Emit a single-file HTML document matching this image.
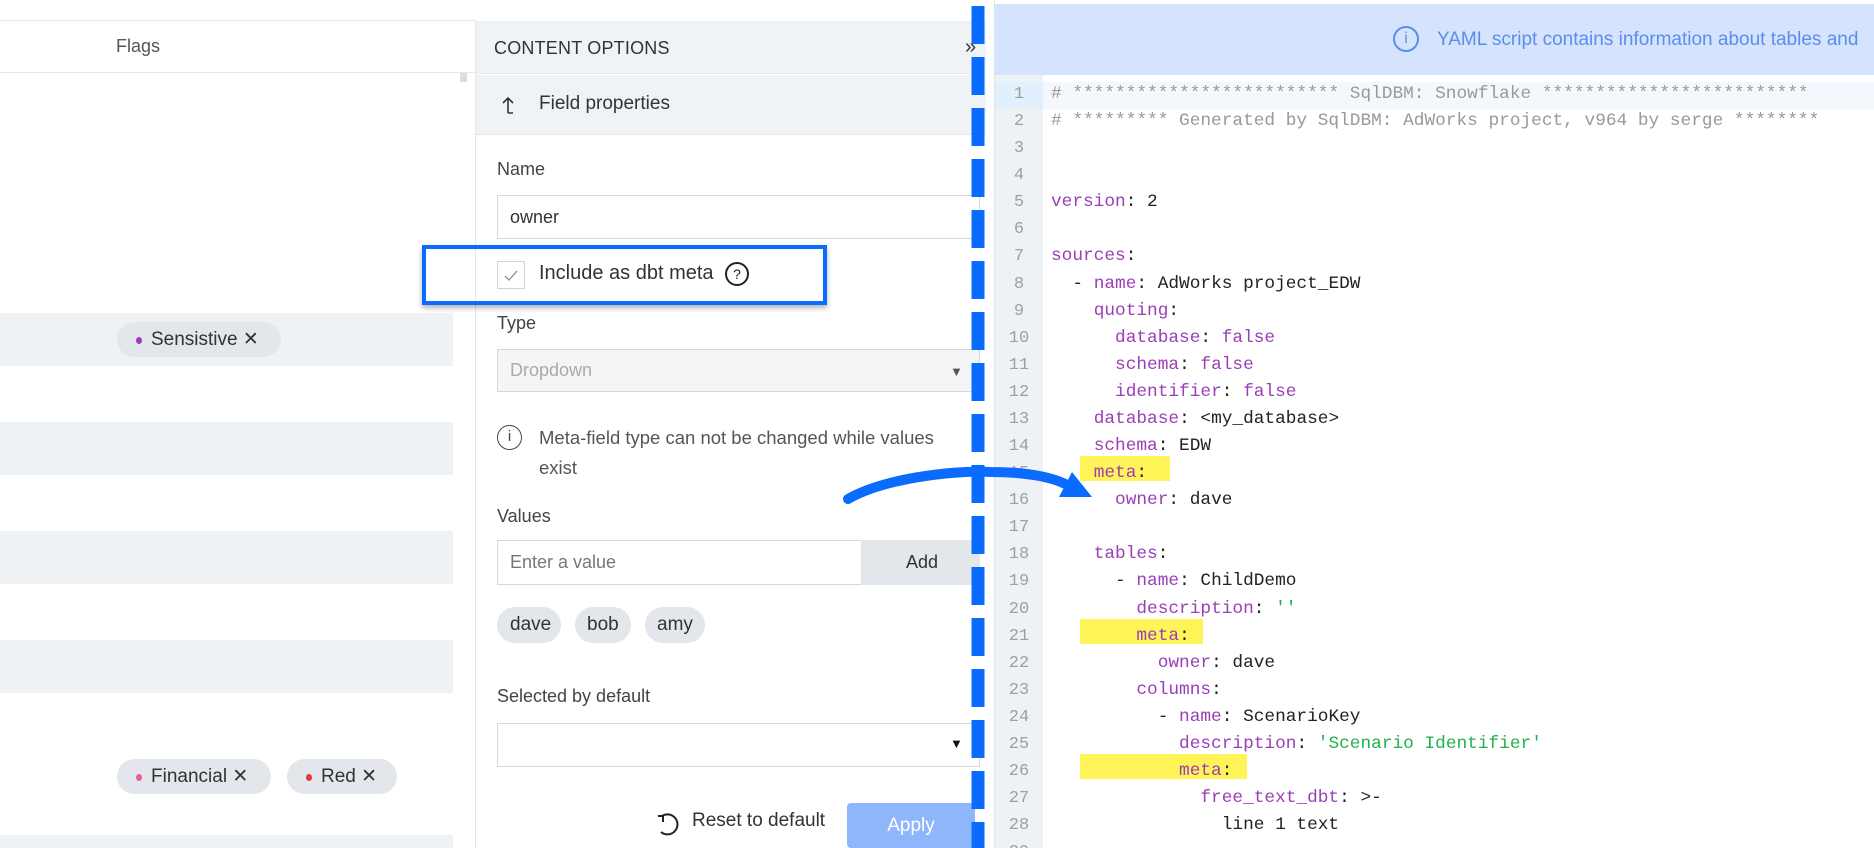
<!DOCTYPE html>
<html><head><meta charset="utf-8"><style>
*{box-sizing:border-box;margin:0;padding:0}
html,body{width:1874px;height:848px;overflow:hidden}
body{background:#fff;font-family:"Liberation Sans",sans-serif;position:relative;color:#333}
.abs{position:absolute}
.stripe{position:absolute;left:0;width:453px;height:53px;background:#eff2f5}
.chip{position:absolute;height:35px;border-radius:18px;background:#e3e6ea;font-size:19px;line-height:35px;padding-left:34px;color:#333}
.chip .d{position:absolute;left:19px;top:15px;width:6px;height:7px;border-radius:50%}
.lbl{position:absolute;left:497px;font-size:18px;color:#444}
.inp{position:absolute;left:497px;width:483px;border:1px solid #d5d8dc;background:#fff;font-size:18px;padding-left:12px}
.ln{position:absolute;left:995px;width:48px;text-align:center;font-family:"Liberation Mono",monospace;font-size:17px;color:#9aa0a8}
.code{position:absolute;left:1051px;font-family:"Liberation Mono",monospace;font-size:17.8px;white-space:pre;color:#222}
.k{color:#9b3fb5}.c{color:#999}.s{color:#22b24c}
.hl{position:absolute;left:1080px;height:25px;background:#fff457}
</style></head><body>
<div class="abs" style="left:0;top:20px;width:475px;height:1px;background:#e3e6ea"></div>
<div class="abs" style="left:0;top:72px;width:475px;height:1px;background:#e3e6ea"></div>
<div class="abs" style="left:116px;top:36px;font-size:18px;color:#555">Flags</div>
<div class="abs" style="left:460px;top:73px;width:7px;height:9px;background:#dcdee1"></div>
<div class="stripe" style="top:313px"></div>
<div class="stripe" style="top:422px"></div>
<div class="stripe" style="top:531px"></div>
<div class="stripe" style="top:640px"></div>
<div class="stripe" style="top:835px;height:13px"></div>
<div class="chip" style="left:117px;top:322px;width:164px"><span class="d" style="background:#9c3fb8"></span>Sensistive ✕</div>
<div class="chip" style="left:117px;top:759px;width:154px"><span class="d" style="background:#e95aa8"></span>Financial ✕</div>
<div class="chip" style="left:287px;top:759px;width:110px"><span class="d" style="background:#e23a3a"></span>Red ✕</div>

<div class="abs" style="left:475px;top:20px;width:1px;height:828px;background:#e3e6ea"></div>
<div class="abs" style="left:476px;top:21px;width:510px;height:53px;background:#eff3f6;border-bottom:1px solid #e3e6ea"></div>
<div class="abs" style="left:494px;top:38px;font-size:18px;color:#333;letter-spacing:.2px">CONTENT OPTIONS</div>
<div class="abs" style="left:965px;top:36px;font-size:20px;color:#333">»</div>
<div class="abs" style="left:476px;top:75px;width:510px;height:60px;background:#eff3f6;border-bottom:1px solid #e3e6ea"></div>
<svg class="abs" style="left:500px;top:95px" width="16" height="20" viewBox="0 0 16 20"><path d="M8 18V3M3 8l5-5 5 5M8 18h5" fill="none" stroke="#333" stroke-width="1.6"/></svg>
<div class="abs" style="left:539px;top:93px;font-size:19px;color:#333">Field properties</div>
<div class="lbl" style="top:159px">Name</div>
<div class="inp" style="top:195px;height:44px;line-height:42px;color:#333">owner</div>
<div class="abs" style="left:422px;top:245px;width:405px;height:60px;border:4px solid #0a6cff;box-shadow:0 3px 5px rgba(0,0,0,.3)"></div>
<div class="abs" style="left:497px;top:261px;width:28px;height:28px;border:1px solid #cfd3d8;background:#fff"></div>
<svg class="abs" style="left:502px;top:266px" width="18" height="18"><path d="M3 10l4 4 8-9" fill="none" stroke="#888" stroke-width="1.2"/></svg>
<div class="abs" style="left:539px;top:262px;font-size:20px;color:#333">Include as dbt meta</div>
<div class="abs" style="left:725px;top:262px;width:24px;height:24px;border:2px solid #222;border-radius:50%;font-size:14px;text-align:center;line-height:20px;color:#222">?</div>
<div class="lbl" style="top:313px">Type</div>
<div class="inp" style="top:349px;height:43px;line-height:41px;background:#f3f5f7;color:#aaa">Dropdown</div>
<div class="abs" style="left:950px;top:364px;font-size:13px;color:#555">▼</div>
<div class="abs" style="left:497px;top:425px;width:25px;height:25px;border:1.5px solid #444;border-radius:50%;font-size:15px;text-align:center;line-height:22px;color:#444">i</div>
<div class="abs" style="left:539px;top:423px;font-size:18.5px;color:#555;line-height:30px;width:445px">Meta-field type can not be changed while values<br>exist</div>
<div class="lbl" style="top:506px">Values</div>
<div class="inp" style="top:540px;height:45px;line-height:43px;color:#777;width:365px">Enter a value</div>
<div class="abs" style="left:861px;top:540px;width:119px;height:45px;background:#e3e6ea;font-size:18px;line-height:45px;padding-left:45px;color:#333">Add</div>
<div class="chip" style="left:497px;top:607px;width:64px;height:36px;padding-left:13px;line-height:36px">dave</div>
<div class="chip" style="left:575px;top:607px;width:56px;height:36px;padding-left:12px;line-height:36px">bob</div>
<div class="chip" style="left:645px;top:607px;width:60px;height:36px;padding-left:12px;line-height:36px">amy</div>
<div class="lbl" style="top:686px">Selected by default</div>
<div class="inp" style="top:723px;height:44px"></div>
<div class="abs" style="left:950px;top:736px;font-size:13px;color:#111">▼</div>
<svg class="abs" style="left:655px;top:810px" width="26" height="28" viewBox="0 0 26 28"><path d="M7 6A10 10 0 1 1 6 22" fill="none" stroke="#222" stroke-width="2"/><path d="M3 6h5v6" fill="none" stroke="#222" stroke-width="2"/></svg>
<div class="abs" style="left:692px;top:810px;font-size:19px;color:#333">Reset to default</div>
<div class="abs" style="left:847px;top:803px;width:128px;height:45px;background:#8fb6fb;border-radius:4px;color:#fff;font-size:19px;line-height:45px;text-align:center">Apply</div>

<div class="abs" style="left:994px;top:0;width:880px;height:848px;background:#fff;border-left:1px solid #e3e6ea"></div>
<div class="abs" style="left:994px;top:4px;width:880px;height:71px;background:#d5e4fc"></div>
<div class="abs" style="left:1393px;top:26px;width:26px;height:26px;border:2px solid #5b8def;border-radius:50%;color:#5b8def;font-size:16px;text-align:center;line-height:22px">i</div>
<div class="abs" style="left:1437px;top:29px;font-size:19px;color:#5b8def;white-space:nowrap">YAML script contains information about tables and</div>
<div class="abs" style="left:995px;top:75px;width:48px;height:773px;background:#eff2f5"></div>
<div class="abs" style="left:995px;top:82px;width:48px;height:27px;background:#e2effd"></div>
<div class="abs" style="left:1043px;top:82px;width:831px;height:27px;background:#f4f8fe"></div>
<div class="hl" style="top:456px;width:90px"></div>
<div class="hl" style="top:619px;width:123px"></div>
<div class="hl" style="top:754px;width:167px"></div>
<div id="code"></div>
<script>
var L=[
'<span class="c"># ************************* SqlDBM: Snowflake *************************</span>',
'<span class="c"># ********* Generated by SqlDBM: AdWorks project, v964 by serge ********</span>',
'','',
'<span class="k">version</span>: 2','',
'<span class="k">sources</span>:',
'  - <span class="k">name</span>: AdWorks project_EDW',
'    <span class="k">quoting</span>:',
'      <span class="k">database</span>: <span class="k">false</span>',
'      <span class="k">schema</span>: <span class="k">false</span>',
'      <span class="k">identifier</span>: <span class="k">false</span>',
'    <span class="k">database</span>: &lt;my_database&gt;',
'    <span class="k">schema</span>: EDW',
'    <span class="k">meta</span>:',
'      <span class="k">owner</span>: dave','',
'    <span class="k">tables</span>:',
'      - <span class="k">name</span>: ChildDemo',
'        <span class="k">description</span>: <span class="s">\'\'</span>',
'        <span class="k">meta</span>:',
'          <span class="k">owner</span>: dave',
'        <span class="k">columns</span>:',
'          - <span class="k">name</span>: ScenarioKey',
'            <span class="k">description</span>: <span class="s">\'Scenario Identifier\'</span>',
'            <span class="k">meta</span>:',
'              <span class="k">free_text_dbt</span>: &gt;-',
'                line 1 text'];
var h='';
for(var i=0;i<29;i++){var y=85+i*27.08;
h+='<div class="ln" style="top:'+y+'px">'+(i+1)+'</div>';
if(i<28)h+='<div class="code" style="top:'+(y-1)+'px">'+L[i]+'</div>';}
document.getElementById('code').innerHTML=h;
</script>
<svg class="abs" style="left:966px;top:0" width="24" height="848"><line x1="12" y1="6" x2="12" y2="848" stroke="#0a6cff" stroke-width="13" stroke-dasharray="38 13"/></svg>
<svg class="abs" style="left:830px;top:450px;overflow:visible" width="280" height="80">
<path d="M18 49C60 25 140 20 160 22C200 22 228 28 242 38" fill="none" stroke="#0a6cff" stroke-width="10" stroke-linecap="round"/>
<path d="M242 22L262 47L229 47Z" fill="#0a6cff"/>
</svg>
</body></html>
